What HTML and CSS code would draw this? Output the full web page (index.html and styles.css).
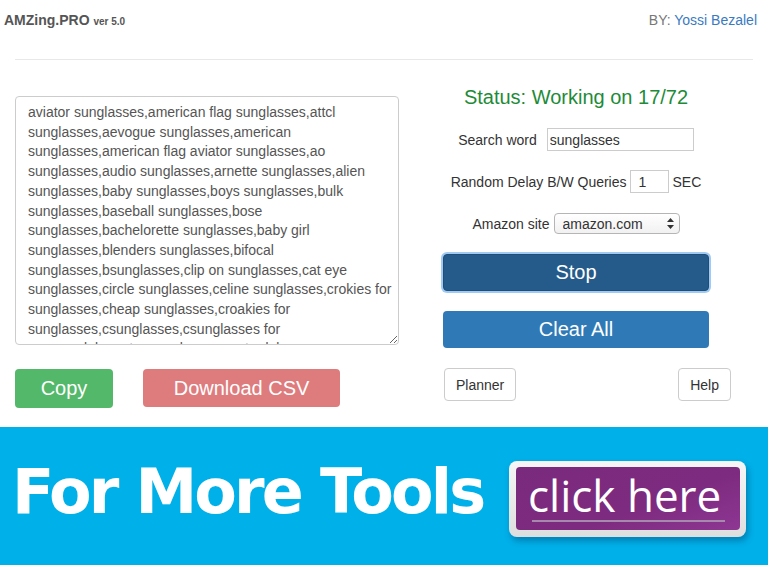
FILE: index.html
```html
<!DOCTYPE html>
<html lang="en">
<head>
  <meta charset="UTF-8" />
  <meta name="viewport" content="width=device-width, initial-scale=1.0"/>
  <title>AMZing.PRO</title>
  <link rel="stylesheet" href="styles.css">
</head>
<body>

  <!-- Header -->
  <div class="header">
    <div class="brand">AMZing.PRO <small>ver 5.0</small></div>
    <div class="author">BY: <a href="#">Yossi Bezalel</a></div>
  </div>
  <hr class="divider">

  <!-- Main -->
  <div class="main">
    <div class="left-col">
      <textarea class="results" id="results">aviator sunglasses,american flag sunglasses,attcl sunglasses,aevogue sunglasses,american sunglasses,american flag aviator sunglasses,ao sunglasses,audio sunglasses,arnette sunglasses,alien sunglasses,baby sunglasses,boys sunglasses,bulk sunglasses,baseball sunglasses,bose sunglasses,bachelorette sunglasses,baby girl sunglasses,blenders sunglasses,bifocal sunglasses,bsunglasses,clip on sunglasses,cat eye sunglasses,circle sunglasses,celine sunglasses,crokies for sunglasses,cheap sunglasses,croakies for sunglasses,csunglasses,csunglasses for women,clubmaster sunglasses,costa del mar sunglasses,cheap aviator sunglasses</textarea>
      <div class="left-actions">
        <button class="btn btn-copy">Copy</button>
        <button class="btn btn-csv">Download CSV</button>
      </div>
    </div>

    <div class="right-col">
      <div class="status">Status: Working on 17/72</div>

      <div class="form-row row-word">
        <label for="word">Search word</label>
        <input type="text" id="word" class="input-word" value="sunglasses">
      </div>

      <div class="form-row row-delay">
        <label for="delay">Random Delay B/W Queries</label>
        <input type="text" id="delay" class="input-delay" value="1">
        <span>SEC</span>
      </div>

      <div class="form-row row-site">
        <label for="site">Amazon site</label>
        <span class="select-wrap">
          <select id="site">
            <option>amazon.com</option>
            <option>amazon.co.uk</option>
            <option>amazon.de</option>
          </select>
          <svg class="select-arrows" width="7" height="11" viewBox="0 0 7 11">
            <path d="M3.5 0 L7 4 L0 4 Z" fill="#333"/>
            <path d="M0 7 L7 7 L3.5 11 Z" fill="#333"/>
          </svg>
        </span>
      </div>

      <button class="btn btn-wide btn-stop">Stop</button>
      <button class="btn btn-wide btn-clear">Clear All</button>

      <div class="small-actions">
        <button class="btn btn-small">Planner</button>
        <button class="btn btn-small">Help</button>
      </div>
    </div>
  </div>

  <!-- Banner -->
  <div class="banner">
    <div class="banner-text">For More Tools</div>
    <a href="#" class="click-frame">
      <span class="click-inner">
        <span class="click-text">click here</span>
        <span class="click-line"></span>
      </span>
    </a>
  </div>

</body>
</html>
```

FILE: styles.css
```css
/* General */
body {
  margin: 0;
  padding: 0;
  background: #fff;
  color: #333;
  font-family: "Liberation Sans", Arial, sans-serif;
  font-size: 14px;
  overflow: hidden;
}

/* Header */
.header {
  display: flex;
  justify-content: space-between;
  padding: 10px 11px 0 4px;
  height: 20px;
  line-height: 20px;
}
.brand {
  font-weight: bold;
  color: #555;
}
.brand small {
  font-size: 10px;
}
.author {
  color: #777;
}
.author a {
  color: #3a7bbf;
  text-decoration: none;
}
.divider {
  margin: 29px 15px 0;
  border: 0;
  border-top: 1px solid #e8e8e8;
  height: 0;
}

/* Main */
.main {
  display: flex;
}
.left-col {
  width: 384px;
  margin-left: 15px;
  padding-top: 36px;
}
.results {
  display: block;
  box-sizing: border-box;
  width: 384px;
  height: 249px;
  margin: 0;
  padding: 6px 3px 6px 12px;
  border: 1px solid #ccc;
  border-radius: 4px;
  font-family: "Liberation Sans", Arial, sans-serif;
  font-size: 14px;
  line-height: 19.7px;
  color: #555;
  resize: vertical;
  overflow: hidden;
}
.left-actions {
  display: flex;
  align-items: flex-start;
  gap: 30px;
  margin-top: 24px;
}

/* Buttons */
.btn {
  font-family: "Liberation Sans", Arial, sans-serif;
  border: 1px solid transparent;
  border-radius: 4px;
  color: #fff;
  cursor: pointer;
  padding: 0;
}
.btn-copy {
  width: 98px;
  height: 39px;
  font-size: 20px;
  background: #54b86a;
}
.btn-csv {
  width: 197px;
  height: 38px;
  font-size: 20px;
  background: #de7b7d;
}

/* Right column */
.right-col {
  width: 334px;
  margin-left: 10px;
  display: flex;
  flex-direction: column;
  align-items: center;
}
.status {
  margin-top: 25px;
  font-size: 20px;
  line-height: 24px;
  color: #1e8b38;
}
.form-row {
  display: flex;
  align-items: center;
  margin-top: 20px;
  height: 23px;
}
.row-word {
  margin-top: 19px;
}
.form-row label {
  margin-right: 10px;
}
.form-row input {
  box-sizing: border-box;
  height: 23px;
  border: 1px solid #ccc;
  font-family: "Liberation Sans", Arial, sans-serif;
  font-size: 14px;
  color: #333;
  outline: none;
}
.input-word {
  width: 147px;
  padding: 0 2px;
}
.row-delay {
  margin-top: 19px;
}
.row-delay label {
  margin-right: 3px;
}
.input-delay {
  width: 39px;
  padding: 0 8px;
  margin-right: 4px;
}
.row-site {
  height: 21px;
  margin-top: 20px;
}
.row-site label {
  margin-right: 4px;
}
.select-wrap {
  position: relative;
  display: inline-block;
}
.select-wrap select {
  appearance: none;
  -webkit-appearance: none;
  box-sizing: border-box;
  width: 126px;
  height: 21px;
  padding: 0 0 0 8px;
  border: 1px solid #b5b5b5;
  border-radius: 4px;
  background: linear-gradient(#fff, #f1f1f1);
  font-family: "Liberation Sans", Arial, sans-serif;
  font-size: 14px;
  color: #333;
}
.select-arrows {
  position: absolute;
  right: 6px;
  top: 5px;
  pointer-events: none;
}
.btn-wide {
  width: 266px;
  height: 37px;
  font-size: 20px;
  margin-top: 20px;
}
.btn-stop {
  background: #255b8a;
  border-color: #1f4e78;
  box-shadow: 0 0 0 2px rgba(120, 180, 235, 0.7);
}
.btn-clear {
  background: #2f7ab6;
}
.small-actions {
  align-self: stretch;
  display: flex;
  justify-content: space-between;
  margin-top: 20px;
  padding: 0 12px 0 35px;
}
.btn-small {
  height: 33px;
  padding: 0 11px;
  font-size: 14px;
  color: #333;
  background: #fff;
  border-color: #ccc;
}

/* Banner */
.banner {
  margin-top: 19px;
  height: 140px;
  background: #00b0e9;
  display: flex;
  justify-content: space-between;
  align-items: flex-start;
  padding: 34px 22px 0 12px;
  box-sizing: border-box;
}
.banner-text {
  font-family: "DejaVu Sans", sans-serif;
  font-weight: bold;
  font-size: 62px;
  line-height: 62px;
  letter-spacing: -2.8px;
  color: #fff;
}
.click-frame {
  display: block;
  width: 237px;
  height: 76px;
  box-sizing: border-box;
  padding: 6px 6px 7px 7px;
  border-radius: 8px;
  background: linear-gradient(#f6f6f6, #dedede);
  box-shadow: 2px 4px 6px rgba(0, 40, 80, 0.35);
  text-decoration: none;
}
.click-inner {
  display: block;
  height: 63px;
  box-sizing: border-box;
  padding: 6px 0 0 12px;
  border-radius: 4px;
  background: linear-gradient(160deg, #7a2a7c 0%, #7d2b80 60%, #8e3693 100%);
}
.click-text {
  display: block;
  font-family: "Open Sans", sans-serif;
  font-size: 44px;
  line-height: 45px;
  color: #fff;
}
.click-line {
  display: block;
  width: 193px;
  height: 2px;
  margin: 2px 0 0 4px;
  background: #a68aad;
}
```
